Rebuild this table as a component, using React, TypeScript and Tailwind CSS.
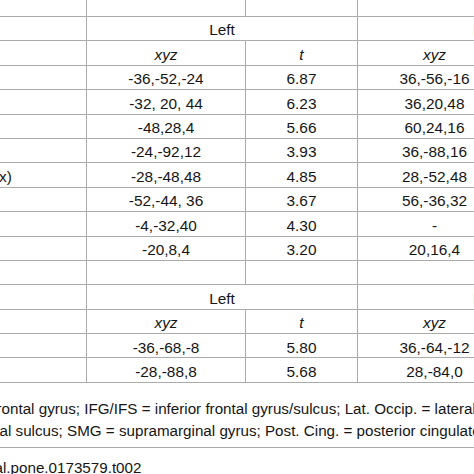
import React from "react";

type Row = { label?: string; xyz: string; t: string; xyzR: string };

const firstBlock: Row[] = [
    { xyz: "-36,-52,-24", t: "6.87", xyzR: "36,-56,-16" },
    { xyz: "-32, 20, 44", t: "6.23", xyzR: "36,20,48" },
    { xyz: "-48,28,4", t: "5.66", xyzR: "60,24,16" },
    { xyz: "-24,-92,12", t: "3.93", xyzR: "36,-88,16" },
    { label: "x)", xyz: "-28,-48,48", t: "4.85", xyzR: "28,-52,48" },
    { xyz: "-52,-44, 36", t: "3.67", xyzR: "56,-36,32" },
    { xyz: "-4,-32,40", t: "4.30", xyzR: "-" },
    { xyz: "-20,8,4", t: "3.20", xyzR: "20,16,4" },
];

const secondBlock: Row[] = [
    { xyz: "-36,-68,-8", t: "5.80", xyzR: "36,-64,-12" },
    { xyz: "-28,-88,8", t: "5.68", xyzR: "28,-84,0" },
];

const grid = "grid grid-cols-[87px_159px_112px_154px_112px] border-b border-[#ababab]";
const cell = "flex items-center justify-center pt-[3px] border-r border-[#ababab]";

const SideHeader = () => (
    <div className={`${grid} h-[24.4px]`}>
        <div className={cell}></div>
        <div className={`${cell} col-span-2`}>Left</div>
        <div className={`${cell} col-span-2 justify-start pl-[115px]`}>Right</div>
    </div>
);

const ColHeader = () => (
    <div className={`${grid} h-[24.4px] italic`}>
        <div className={cell}></div>
        <div className={cell}>xyz</div>
        <div className={cell}>t</div>
        <div className={cell}>xyz</div>
        <div className={cell}>t</div>
    </div>
);

const DataRow = ({ row }: { row: Row }) => (
    <div className={`${grid} h-[24.4px]`}>
        <div className={`${cell} justify-start -ml-[1px]`}>{row.label}</div>
        <div className={cell}>{row.xyz}</div>
        <div className={cell}>{row.t}</div>
        <div className={cell}>{row.xyzR}</div>
        <div className={cell}></div>
    </div>
);

export default function App() {
    return (
        <div className="w-[474px] h-[474px] overflow-hidden bg-white text-[#161616] text-[15.4px] leading-none font-['Liberation_Sans',Arial,sans-serif]">
            {/* TABLE */}
            <div className="w-[624px]">
                <div className={`${grid} h-[17px]`}>
                    <div className={cell}></div>
                    <div className={cell}></div>
                    <div className={cell}></div>
                    <div className={cell}></div>
                    <div className={cell}></div>
                </div>
                <SideHeader />
                <ColHeader />
                {firstBlock.map((r, i) => (
                    <DataRow key={i} row={r} />
                ))}
                <div className={`${grid} h-[24.4px]`}>
                    <div className={cell}></div>
                    <div className={cell}></div>
                    <div className={cell}></div>
                    <div className={cell}></div>
                    <div className={cell}></div>
                </div>
                <SideHeader />
                <ColHeader />
                {secondBlock.map((r, i) => (
                    <DataRow key={i} row={r} />
                ))}
            </div>
            {/* FOOTNOTE */}
            <div className="mt-[15px] text-[15.2px] leading-[22px] whitespace-nowrap">
                <p className="-ml-[3.5px]">rontal gyrus; IFG/IFS = inferior frontal gyrus/sulcus; Lat. Occip. = lateral occipital</p>
                <p className="-ml-[0.5px]">al sulcus; SMG = supramarginal gyrus; Post. Cing. = posterior cingulate</p>
            </div>
            <div className="mt-[5px] border-t border-[#ababab]"></div>
            <p className="mt-[9px] text-[15.2px] leading-[22px] whitespace-nowrap -ml-[5.5px]">al.pone.0173579.t002</p>
        </div>
    );
}
